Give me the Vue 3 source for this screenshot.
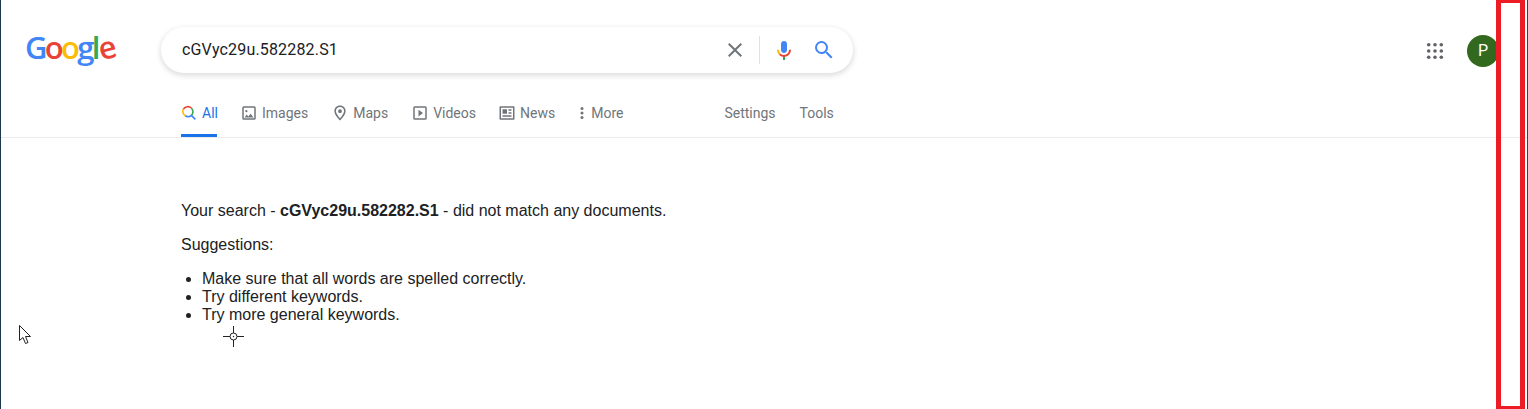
<template>
  <div class="page">
    <header class="top">
      <div class="logo" aria-label="Google">
        <span class="blue">G</span><span class="red">o</span><span class="yellow">o</span><span class="blue">g</span><span class="green">l</span><span class="red tilt">e</span>
      </div>
      <div class="search-box">
        <span class="query">{{ query }}</span>
        <button class="box-icon clear">
          <svg width="24" height="24" viewBox="0 0 24 24"><path fill="#70757a" d="M19 6.410L17.590 5 12 10.590 6.410 5 5 6.410 10.590 12 5 17.590 6.410 19 12 13.410 17.590 19 19 17.590 13.410 12z"/></svg>
        </button>
        <span class="divider"></span>
        <button class="box-icon mic">
          <svg width="24" height="24" viewBox="0 0 24 24">
            <path fill="#4285f4" d="M12 15c1.660 0 3-1.310 3-2.970V5.970C15 4.310 13.660 3 12 3S9 4.310 9 5.970v6.060C9 13.690 10.340 15 12 15z"/>
            <path fill="#34a853" d="M11 18.080h2V22h-2z"/>
            <path fill="#fbbc05" d="M7.050 16.870c-1.270-1.330-2.050-3.100-2.050-5.040h2c0 1.400.560 2.670 1.460 3.600l-1.410 1.440z"/>
            <path fill="#ea4335" d="M12 16.930c-1.390 0-2.650-.570-3.540-1.500l-1.410 1.440C8.320 18.200 10.060 19 12 19c3.870 0 7-3.130 7-7.170h-2c0 2.890-2.240 5.100-5 5.100z"/>
          </svg>
        </button>
        <button class="box-icon lens">
          <svg width="24" height="24" viewBox="0 0 24 24"><path fill="#4285f4" d="M15.500 14h-.790l-.280-.270A6.471 6.471 0 0 0 16 9.500 6.500 6.500 0 1 0 9.500 16c1.610 0 3.090-.590 4.230-1.570l.270.280v.790l5 4.990L20.490 19l-4.990-5zm-6 0C7.010 14 5 11.990 5 9.500S7.010 5 9.500 5 14 7.010 14 9.500 11.990 14 9.500 14z"/></svg>
        </button>
      </div>
      <div class="top-right">
        <svg class="apps" width="18" height="18" viewBox="0 0 18 18">
          <circle v-for="d in appDots" :key="d.k" :cx="d.x" :cy="d.y" r="1.800" fill="#5f6368"/>
        </svg>
        <div class="avatar">P</div>
      </div>
    </header>

    <nav class="tabs">
      <a class="tab active">
        <svg width="16" height="16" viewBox="0 0 24 24" fill="none" stroke-width="2.400">
          <path stroke="#4285f4" d="M15.600 15.600L21.500 21.500"/>
          <path stroke="#ea4335" d="M3.400 6.600A7.800 7.800 0 0 1 15.500 4.500"/>
          <path stroke="#34a853" d="M15.500 4.500A7.800 7.800 0 0 1 15.600 15.600"/>
          <path stroke="#fbbc05" d="M3.400 6.600A7.800 7.800 0 0 0 6.500 16.200"/>
          <path stroke="#4285f4" d="M6.500 16.200A7.800 7.800 0 0 0 15.600 15.600"/>
        </svg>
        All
      </a>
      <a class="tab">
        <svg width="18" height="18" viewBox="0 0 24 24"><path fill="#70757a" fill-rule="evenodd" d="M5 3h14a2 2 0 0 1 2 2v14a2 2 0 0 1-2 2H5a2 2 0 0 1-2-2V5a2 2 0 0 1 2-2zm0 2v14h14V5H5zm9.140 7.860L18 18H6l3-3.860 2.140 2.590 3-3.870zM8.500 11a1.500 1.500 0 1 1 0-3 1.500 1.500 0 0 1 0 3z"/></svg>
        Images
      </a>
      <a class="tab">
        <svg width="18" height="18" viewBox="0 0 24 24"><path fill="#70757a" d="M12 2C7.600 2 4.500 5.200 4.500 9.400c0 5.200 6 11.200 7.500 12.600 1.500-1.400 7.500-7.400 7.500-12.600C19.500 5.200 16.400 2 12 2zm0 17.100C9.800 16.700 6.500 12.500 6.500 9.400 6.500 6.300 8.800 4 12 4s5.500 2.300 5.500 5.400c0 3.100-3.300 7.300-5.500 9.700zM12 7a2.500 2.500 0 1 0 0 5 2.500 2.500 0 0 0 0-5z"/></svg>
        Maps
      </a>
      <a class="tab tight">
        <svg width="18" height="18" viewBox="0 0 24 24"><path fill="#70757a" d="M10 16.500l6-4.500-6-4.500v9zM19 3H5a2 2 0 0 0-2 2v14a2 2 0 0 0 2 2h14a2 2 0 0 0 2-2V5a2 2 0 0 0-2-2zm0 16H5V5h14v14z"/></svg>
        Videos
      </a>
      <a class="tab">
        <svg width="18" height="18" viewBox="0 0 24 24"><path fill="#70757a" d="M20 5v14H4V5h16m1-2H3a1 1 0 0 0-1 1v16a1 1 0 0 0 1 1h18a1 1 0 0 0 1-1V4a1 1 0 0 0-1-1zM6 7h6v6H6V7zm8 0h4v2h-4V7zm0 4h4v2h-4v-2zM6 15h12v2H6v-2z"/></svg>
        News
      </a>
      <a class="tab more">
        <svg width="4" height="16" viewBox="0 0 4 16"><circle cx="2" cy="3.500" r="1.500" fill="#70757a"/><circle cx="2" cy="8" r="1.500" fill="#70757a"/><circle cx="2" cy="12.500" r="1.500" fill="#70757a"/></svg>
        More
      </a>
      <div class="tools">
        <a class="tab">Settings</a>
        <a class="tab">Tools</a>
      </div>
    </nav>

    <main class="results">
      <p>Your search - <b>{{ query }}</b> - did not match any documents.</p>
      <p>Suggestions:</p>
      <ul>
        <li v-for="tip in tips" :key="tip">{{ tip }}</li>
      </ul>
    </main>

    <!-- annotation + pointers drawn over the page -->
    <div class="red-frame"></div>
    <svg class="cursor" width="14" height="21" viewBox="0 0 14 21">
      <path fill="#fff" stroke="#222" stroke-width="1" d="M.5.500v15l3.500-3 2.500 6 2.500-1-2.500-6h5z"/>
    </svg>
    <svg class="cross" width="21" height="21" viewBox="0 0 21 21">
      <path stroke="#222" stroke-width="1" fill="none" d="M10.500 0v7M10.500 14v7M0 10.500h7M14 10.500h7"/>
      <circle cx="10.500" cy="10.500" r="3.500" fill="none" stroke="#222"/>
      <circle cx="10.500" cy="10.500" r=".7" fill="#222"/>
    </svg>
  </div>
</template>

<script setup>
const query = 'cGVyc29u.582282.S1';
const tips = [
  'Make sure that all words are spelled correctly.',
  'Try different keywords.',
  'Try more general keywords.'
];
const appDots = [];
for (let r = 0; r < 3; r++) {
  for (let c = 0; c < 3; c++) {
    appDots.push({ k: r + '-' + c, x: 2.700 + c * 6.300, y: 2.700 + r * 6.300 });
  }
}
</script>

<style>
html, body { background: #fff; overflow: hidden; }
</style>

<style scoped>
.page { position: relative; width: 1528px; height: 409px; box-sizing: border-box; border-left: 1px solid #1b3a52; border-right: 1px solid #3c4043; background: #fff; overflow: hidden; font-family: "Liberation Sans", Arial, sans-serif; color: #202124; }
.top { display: flex; align-items: center; height: 46px; padding-top: 27px; }
.logo { width: 160px; padding-left: 24px; box-sizing: border-box; font-family: "Open Sans", sans-serif; font-size: 31px; font-weight: 600; letter-spacing: -2.700px; line-height: 46px; position: relative; top: -3px; }
.blue { color: #4285f4; }
.red { color: #ea4335; }
.yellow { color: #fbbc05; }
.green { color: #34a853; }
.tilt { display: inline-block; transform: rotate(-14deg); }
.search-box { width: 692px; height: 46px; border-radius: 24px; box-sizing: border-box; box-shadow: 0 2px 5px 1px rgba(64, 60, 67, .16); display: flex; align-items: center; padding: 0 17px 0 21px; }
.query { flex: 1; font-family: Roboto, sans-serif; font-size: 16px; letter-spacing: .17px; color: #202124; position: relative; top: -1px; }
.box-icon { border: none; background: none; padding: 0; width: 24px; height: 24px; display: block; }
.box-icon svg { display: block; }
.divider { width: 1px; height: 28px; background: #dfe1e5; margin: 0 12px; }
.mic { margin-right: 16px; }
.top-right { flex: 1; display: flex; align-items: center; justify-content: flex-end; padding-right: 28px; }
.apps { display: block; margin-right: 23px; position: relative; top: 1px; }
.avatar { width: 32px; height: 32px; border-radius: 50%; background: #33691e; color: #fff; font-family: Roboto, sans-serif; font-size: 16px; line-height: 32px; text-align: center; position: relative; top: 1px; }
.tabs { display: flex; height: 65px; padding-left: 180px; box-sizing: border-box; border-bottom: 1px solid #ebebeb; }
.tab { display: flex; align-items: center; gap: 4px; height: 62px; box-sizing: border-box; padding-top: 17px; margin-right: 23px; font-family: Roboto, sans-serif; font-size: 14px; color: #70757a; }
.tab svg { flex-shrink: 0; }
.tab.tight { margin-right: 22px; }
.tab.active { gap: 5px; width: 36px; color: #1a73e8; border-bottom: 3px solid #1a73e8; height: 64px; padding-top: 18px; white-space: nowrap; }
.tab.more { margin-right: 0; gap: 7px; }
.tab.more svg { margin-left: 2px; }
.tools { display: flex; margin-left: 101px; }
.tools .tab { margin-right: 24px; }
.results { padding: 64px 0 0 180px; font-size: 16px; line-height: 18px; color: #202124; }
.results p { margin: 0 0 16px; }
.results ul { margin: 0; padding-left: 21px; }
.red-frame { position: absolute; left: 1495px; top: -2px; width: 19px; height: 403px; border: 5px solid #ed1c24; }
.cursor { position: absolute; left: 18px; top: 325px; }
.cross { position: absolute; left: 222px; top: 326px; }
</style>
